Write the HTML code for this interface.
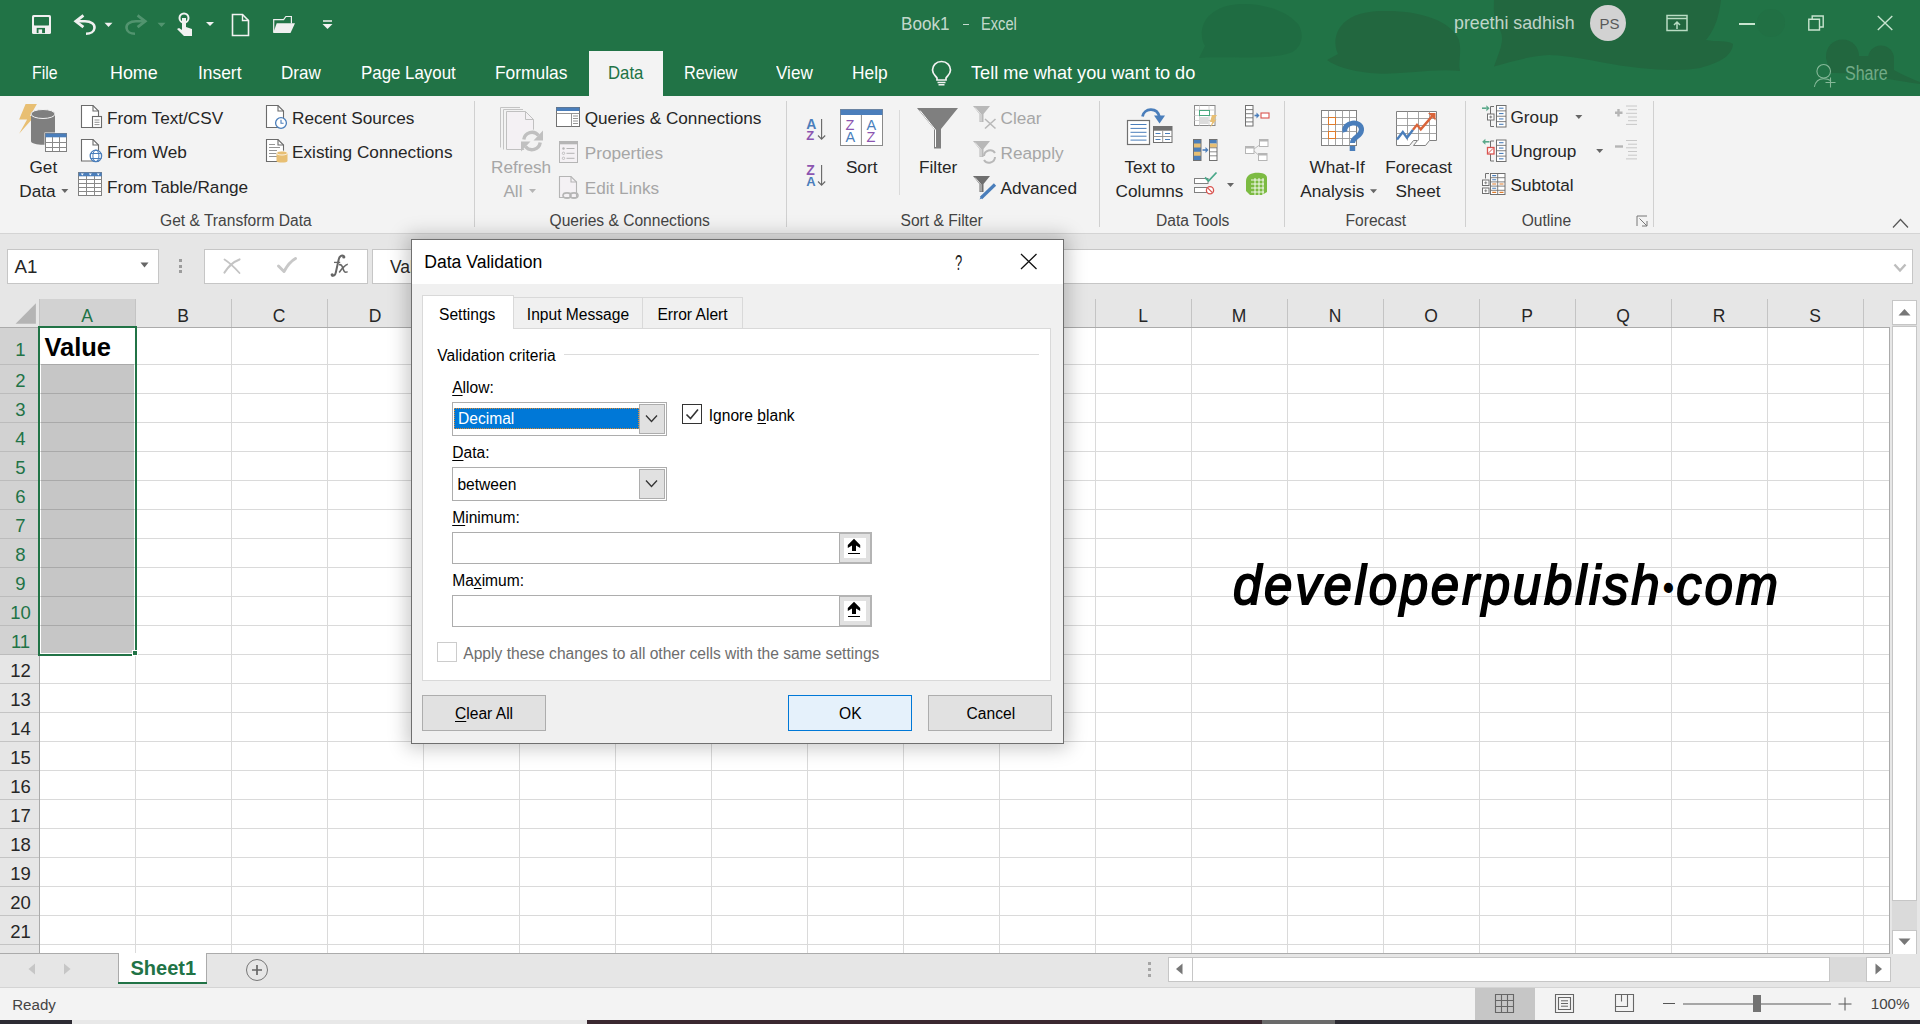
<!DOCTYPE html>
<html><head><meta charset="utf-8"><title>Excel - Data Validation</title>
<style>
html,body{margin:0;padding:0;width:1920px;height:1024px;overflow:hidden;background:#fff;}
body{position:relative;font-family:"Liberation Sans",sans-serif;}
.t{position:absolute;white-space:nowrap;line-height:1;}
.r{position:absolute;box-sizing:border-box;}
u{text-decoration:underline;text-underline-offset:2px;}
</style></head><body>
<div class="r" style="left:0px;top:0px;width:1920px;height:96px;background:#217346;"></div>
<svg class="r" style="left:0;top:0" width="1920" height="96" viewBox="0 0 1920 96"><path d="M1199 58 L1205 46 C1196 30 1205 6 1240 4 C1262 3 1285 10 1298 24 C1306 36 1300 50 1290 53 C1270 60 1230 56 1199 58Z" fill="#1f6c41" opacity="0.9"/><path d="M1327 60 L1338 54 C1330 36 1340 12 1380 11 C1420 10 1450 20 1459 40 C1462 52 1458 62 1460 71 C1430 68 1400 76 1370 73 C1350 71 1335 66 1327 60Z" fill="#22673f"/><path d="M1494 0 H1721 C1719 15 1716 28 1706 40 C1715 42 1728 40 1733 44 C1732 55 1722 62 1700 68 C1680 72 1640 70 1600 62 C1580 58 1560 55 1549 55 C1530 56 1510 62 1494 66.5 C1500 50 1505 40 1500 30 C1492 18 1494 8 1494 0Z" fill="#22673f"/><circle cx="1842.5" cy="56" r="16.5" fill="#22673f"/><circle cx="1881" cy="58.5" r="13" fill="#22673f"/><path d="M1826 56 H1894 V70 C1905 76 1915 80 1920 82 V84 C1890 80 1860 72 1830 73 Z" fill="#22673f"/><ellipse cx="1771" cy="23" rx="14" ry="14" fill="#217044"/></svg>
<svg class="r" style="left:30px;top:13px;" width="24" height="24" viewBox="0 0 24 24"><g transform="translate(-30 -13)"><rect x="32" y="15" width="19" height="19" rx="1.6" fill="#f0f0f0"/><rect x="34" y="17" width="15" height="8.4" rx="0.6" fill="#217346"/><rect x="36.7" y="27.9" width="8.3" height="5.2" fill="#217346"/><rect x="38.5" y="29.4" width="3.6" height="3.7" fill="#f0f0f0"/></g></svg>
<svg class="r" style="left:70px;top:12px;" width="30" height="26" viewBox="0 0 30 26"><g transform="translate(-70 -12)"><path d="M82.3 16.3 L75.8 21.3 L82.3 26.3" fill="none" stroke="#f0f0f0" stroke-width="2.8" stroke-linecap="square"/><path d="M76.5 21.3 H85 C91.5 21.3 94.8 24.5 94.5 28 C94.2 31.5 90.5 33.8 86 33.8" fill="none" stroke="#f0f0f0" stroke-width="2.6"/></g></svg>
<svg class="r" style="left:104px;top:22px;" width="9" height="6" viewBox="0 0 9 6"><path d="M0.5 0.8h8l-4 4.2z" fill="#f0f0f0"/></svg>
<svg class="r" style="left:122px;top:12px;" width="30" height="26" viewBox="0 0 30 26"><g transform="translate(-122 -12)"><path d="M138.7 16.3 L145.2 21.3 L138.7 26.3" fill="none" stroke="#52946f" stroke-width="2.8" stroke-linecap="square"/><path d="M144.5 21.3 H136 C129.5 21.3 126.2 24.5 126.5 28 C126.8 31.5 130.5 33.8 135 33.8" fill="none" stroke="#52946f" stroke-width="2.6"/></g></svg>
<svg class="r" style="left:157px;top:22px;" width="9" height="6" viewBox="0 0 9 6"><path d="M0.5 0.8h8l-4 4.2z" fill="#52946f"/></svg>
<svg class="r" style="left:175px;top:12px;" width="20" height="25" viewBox="0 0 20 25"><circle cx="9" cy="6" r="4.5" fill="none" stroke="#f2f2f2" stroke-width="2"/><path d="M7 6h4v9l6 2v7H9l-7-7 2-1 3 2z" fill="#f2f2f2"/></svg>
<svg class="r" style="left:205px;top:21px;" width="12" height="8" viewBox="0 0 12 8"><path d="M1 1h8l-4 4z" fill="#f2f2f2"/></svg>
<svg class="r" style="left:231px;top:13px;" width="20" height="24" viewBox="0 0 20 24"><path d="M1.5 1.5h10l6 6v15h-16z" fill="none" stroke="#f2f2f2" stroke-width="1.6"/><path d="M11.5 1.5v6h6" fill="none" stroke="#f2f2f2" stroke-width="1.4"/></svg>
<svg class="r" style="left:270px;top:13px;" width="28" height="23" viewBox="0 0 28 23"><g transform="translate(-270 -13)"><path d="M273.7 32.5 V19.7 H283.6 L285.9 16.5 H291.4 V23.5" fill="none" stroke="#f0f0f0" stroke-width="1.2"/><path d="M276.7 23.2 H295 L290.5 33 H273.2 Z" fill="#f0f0f0"/></g></svg>
<svg class="r" style="left:321px;top:20px;" width="13" height="10" viewBox="0 0 13 10"><path d="M2 1h9" stroke="#f2f2f2" stroke-width="1.5"/><path d="M1.5 4h10l-5 5z" fill="#f2f2f2"/></svg>
<div class="t" style="left:901.00px;top:14.99px;font-size:18.84px;color:rgba(255,255,255,0.74);font-weight:normal;transform:scaleX(0.9080);transform-origin:0 0;">Book1</div>
<div class="r" style="left:963px;top:24px;width:5.5px;height:1.2px;background:rgba(255,255,255,0.74);"></div>
<div class="t" style="left:980.50px;top:14.99px;font-size:18.84px;color:rgba(255,255,255,0.74);font-weight:normal;transform:scaleX(0.7772);transform-origin:0 0;">Excel</div>
<div class="t" style="left:1454px;top:14.87px;font-size:17.8px;color:rgba(255,255,255,0.72);font-weight:normal;font-style:normal;">preethi sadhish</div>
<div class="r" style="left:1590px;top:5px;width:36px;height:36px;border-radius:50%;background:#d2d2d2;"></div>
<div class="t" style="left:1599.5px;top:16.05px;font-size:15px;color:#595959;font-weight:normal;font-style:normal;">PS</div>
<svg class="r" style="left:1666px;top:14px;" width="22" height="18" viewBox="0 0 22 18"><path d="M1 1.5h20v15H1z" fill="none" stroke="#b9dcc3" stroke-width="1.5"/><path d="M1 4.5h20" stroke="#b9dcc3" stroke-width="1.5"/><path d="M11 15V8M8 11l3-3 3 3" fill="none" stroke="#b9dcc3" stroke-width="1.5"/></svg>
<div class="r" style="left:1739px;top:23px;width:16px;height:1.6px;background:#c8e4cf;"></div>
<svg class="r" style="left:1806px;top:13px;" width="20" height="20" viewBox="0 0 20 20"><g transform="translate(-1806 -13)"><path d="M1808.8 19.2h10.7v10.8h-10.7z" fill="none" stroke="#c8e4cf" stroke-width="1.4"/><path d="M1812.2 19.2v-3.2h11v11h-3.7" fill="none" stroke="#c8e4cf" stroke-width="1.4"/></g></svg>
<svg class="r" style="left:1876px;top:14px;" width="18" height="18" viewBox="0 0 18 18"><path d="M1.8 2l14.5 14M16.3 2L1.8 16" stroke="#c8e4cf" stroke-width="1.4"/></svg>
<div class="r" style="left:589px;top:51px;width:74px;height:45px;background:#f3f3f3;"></div>
<div class="t" style="left:31.80px;top:63.99px;font-size:18.84px;color:#ffffff;font-weight:normal;transform:scaleX(0.8407);transform-origin:0 0;">File</div>
<div class="t" style="left:110.00px;top:63.99px;font-size:18.84px;color:#ffffff;font-weight:normal;transform:scaleX(0.9502);transform-origin:0 0;">Home</div>
<div class="t" style="left:197.50px;top:63.99px;font-size:18.84px;color:#ffffff;font-weight:normal;transform:scaleX(0.9235);transform-origin:0 0;">Insert</div>
<div class="t" style="left:280.80px;top:63.99px;font-size:18.84px;color:#ffffff;font-weight:normal;transform:scaleX(0.9047);transform-origin:0 0;">Draw</div>
<div class="t" style="left:361.00px;top:63.99px;font-size:18.84px;color:#ffffff;font-weight:normal;transform:scaleX(0.8961);transform-origin:0 0;">Page Layout</div>
<div class="t" style="left:495.00px;top:63.99px;font-size:18.84px;color:#ffffff;font-weight:normal;transform:scaleX(0.9228);transform-origin:0 0;">Formulas</div>
<div class="t" style="left:683.50px;top:63.99px;font-size:18.84px;color:#ffffff;font-weight:normal;transform:scaleX(0.8641);transform-origin:0 0;">Review</div>
<div class="t" style="left:776.20px;top:63.99px;font-size:18.84px;color:#ffffff;font-weight:normal;transform:scaleX(0.9085);transform-origin:0 0;">View</div>
<div class="t" style="left:852.40px;top:63.99px;font-size:18.84px;color:#ffffff;font-weight:normal;transform:scaleX(0.9195);transform-origin:0 0;">Help</div>
<div class="t" style="left:608.00px;top:63.99px;font-size:18.84px;color:#217346;font-weight:normal;transform:scaleX(0.8884);transform-origin:0 0;">Data</div>
<svg class="r" style="left:931px;top:60px;" width="21" height="26" viewBox="0 0 21 26"><path d="M10.5 1.5 C5 1.5 1.5 5.5 1.5 10 C1.5 14 4.5 15.5 6 18 V20 H15 V18 C16.5 15.5 19.5 14 19.5 10 C19.5 5.5 16 1.5 10.5 1.5Z" fill="none" stroke="#f2f2f2" stroke-width="1.7"/><path d="M6.5 22.5h8M7.5 24.8h6" stroke="#f2f2f2" stroke-width="1.5"/></svg>
<div class="t" style="left:970.50px;top:63.99px;font-size:18.84px;color:#ffffff;font-weight:normal;transform:scaleX(0.9656);transform-origin:0 0;">Tell me what you want to do</div>
<svg class="r" style="left:1812px;top:62px;" width="26" height="28" viewBox="0 0 26 28"><g transform="translate(-1812 -62)"><circle cx="1823.7" cy="71.3" r="6.8" fill="none" stroke="#86b999" stroke-width="1.1"/><path d="M1814.4 86.8 C1815.5 81.5 1819 78.8 1823.5 78.8 C1826.5 78.8 1829 79.5 1831 80.8" fill="none" stroke="#86b999" stroke-width="1.1"/><path d="M1830.5 77.5v10M1825.5 82.5h10" stroke="#86b999" stroke-width="1.1"/></g></svg>
<div class="t" style="left:1844.70px;top:63.87px;font-size:19.57px;color:#72ab87;font-weight:normal;transform:scaleX(0.8193);transform-origin:0 0;">Share</div>
<div class="r" style="left:0px;top:96px;width:1920px;height:137px;background:#f3f3f3;"></div>
<div class="r" style="left:0px;top:233px;width:1920px;height:1px;background:#d4d4d4;"></div>
<div class="r" style="left:474px;top:101px;width:1px;height:126px;background:#d0d0d0;"></div>
<div class="r" style="left:786px;top:101px;width:1px;height:126px;background:#d0d0d0;"></div>
<div class="r" style="left:1099px;top:101px;width:1px;height:126px;background:#d0d0d0;"></div>
<div class="r" style="left:1284px;top:101px;width:1px;height:126px;background:#d0d0d0;"></div>
<div class="r" style="left:1465px;top:101px;width:1px;height:126px;background:#d0d0d0;"></div>
<div class="r" style="left:1653px;top:101px;width:1px;height:126px;background:#d0d0d0;"></div>
<div class="r" style="left:899px;top:110px;width:1px;height:85px;background:#dadada;"></div>
<div class="t" style="left:160px;top:213.04px;font-size:15.6px;color:#444444;font-weight:normal;font-style:normal;">Get &amp; Transform Data</div>
<div class="t" style="left:549.5px;top:213.04px;font-size:15.6px;color:#444444;font-weight:normal;font-style:normal;">Queries &amp; Connections</div>
<div class="t" style="left:900.5px;top:213.04px;font-size:15.6px;color:#444444;font-weight:normal;font-style:normal;">Sort &amp; Filter</div>
<div class="t" style="left:1156px;top:213.04px;font-size:15.6px;color:#444444;font-weight:normal;font-style:normal;">Data Tools</div>
<div class="t" style="left:1345.5px;top:213.04px;font-size:15.6px;color:#444444;font-weight:normal;font-style:normal;">Forecast</div>
<div class="t" style="left:1521.7px;top:213.04px;font-size:15.6px;color:#444444;font-weight:normal;font-style:normal;">Outline</div>
<div class="t" style="left:29.5px;top:158.98px;font-size:17.2px;color:#262626;font-weight:normal;font-style:normal;">Get</div>
<div class="t" style="left:19.3px;top:182.78px;font-size:17.2px;color:#262626;font-weight:normal;font-style:normal;">Data</div>
<div class="t" style="left:107px;top:109.68px;font-size:17.2px;color:#262626;font-weight:normal;font-style:normal;">From Text/CSV</div>
<div class="t" style="left:107px;top:144.18px;font-size:17.2px;color:#262626;font-weight:normal;font-style:normal;">From Web</div>
<div class="t" style="left:107px;top:178.88px;font-size:17.2px;color:#262626;font-weight:normal;font-style:normal;">From Table/Range</div>
<div class="t" style="left:292px;top:109.68px;font-size:17.2px;color:#262626;font-weight:normal;font-style:normal;">Recent Sources</div>
<div class="t" style="left:292px;top:144.18px;font-size:17.2px;color:#262626;font-weight:normal;font-style:normal;">Existing Connections</div>
<div class="t" style="left:491px;top:158.98px;font-size:17.2px;color:#a6a6a6;font-weight:normal;font-style:normal;">Refresh</div>
<div class="t" style="left:503.4px;top:182.78px;font-size:17.2px;color:#a6a6a6;font-weight:normal;font-style:normal;">All</div>
<div class="t" style="left:584.7px;top:109.68px;font-size:17.2px;color:#262626;font-weight:normal;font-style:normal;">Queries &amp; Connections</div>
<div class="t" style="left:584.7px;top:145.18px;font-size:17.2px;color:#a6a6a6;font-weight:normal;font-style:normal;">Properties</div>
<div class="t" style="left:584.7px;top:179.88px;font-size:17.2px;color:#a6a6a6;font-weight:normal;font-style:normal;">Edit Links</div>
<div class="t" style="left:845.9px;top:158.98px;font-size:17.2px;color:#262626;font-weight:normal;font-style:normal;">Sort</div>
<div class="t" style="left:919px;top:158.98px;font-size:17.2px;color:#262626;font-weight:normal;font-style:normal;">Filter</div>
<div class="t" style="left:1000.5px;top:109.68px;font-size:17.2px;color:#a6a6a6;font-weight:normal;font-style:normal;">Clear</div>
<div class="t" style="left:1000.5px;top:145.18px;font-size:17.2px;color:#a6a6a6;font-weight:normal;font-style:normal;">Reapply</div>
<div class="t" style="left:1000.5px;top:179.88px;font-size:17.2px;color:#262626;font-weight:normal;font-style:normal;">Advanced</div>
<div class="t" style="left:1124.4px;top:158.98px;font-size:17.2px;color:#262626;font-weight:normal;font-style:normal;">Text to</div>
<div class="t" style="left:1115.6px;top:182.78px;font-size:17.2px;color:#262626;font-weight:normal;font-style:normal;">Columns</div>
<div class="t" style="left:1309.5px;top:158.98px;font-size:17.2px;color:#262626;font-weight:normal;font-style:normal;">What-If</div>
<div class="t" style="left:1300.3px;top:182.78px;font-size:17.2px;color:#262626;font-weight:normal;font-style:normal;">Analysis</div>
<div class="t" style="left:1385.2px;top:158.98px;font-size:17.2px;color:#262626;font-weight:normal;font-style:normal;">Forecast</div>
<div class="t" style="left:1395.6px;top:182.78px;font-size:17.2px;color:#262626;font-weight:normal;font-style:normal;">Sheet</div>
<div class="t" style="left:1510.5px;top:109.18px;font-size:17.2px;color:#262626;font-weight:normal;font-style:normal;">Group</div>
<div class="t" style="left:1510.5px;top:143.38px;font-size:17.2px;color:#262626;font-weight:normal;font-style:normal;">Ungroup</div>
<div class="t" style="left:1510.5px;top:177.18px;font-size:17.2px;color:#262626;font-weight:normal;font-style:normal;">Subtotal</div>
<svg class="r" style="left:0;top:0" width="1920" height="240" viewBox="0 0 1920 240"><path d="M61.3 189h7l-3.5 4z" fill="#666"/><path d="M529 189h7l-3.5 4z" fill="#b5b5b5"/><path d="M1227 183h7l-3.5 4z" fill="#666"/><path d="M1370 189.2h7l-3.5 4z" fill="#666"/><path d="M1575.3 115h7l-3.5 4z" fill="#666"/><path d="M1596.2 149h7l-3.5 4z" fill="#666"/><path d="M25.6 104.1 H36.9 L30 116.1 H34.9 L19.1 133.7 L27.1 119.5 H19.1 Z" fill="#e8bf73"/><path d="M31 114 V141 C31 146 55 146 55 141 V114 Z" fill="#7f7f7f"/><ellipse cx="43" cy="114" rx="12" ry="4.5" fill="#7f7f7f" stroke="#f3f3f3" stroke-width="1"/><rect x="44.5" y="132.5" width="23" height="20" fill="#f3f3f3"/><rect x="45.5" y="133.5" width="21" height="18" fill="#fff" stroke="#808080" stroke-width="1"/><rect x="45.5" y="133.5" width="21" height="3.8" fill="#4a7ebb"/><path d="M52.5 137v14M59.5 137v14M45.5 142.5h21M45.5 147.5h21" stroke="#8a8a8a" stroke-width="1"/><path d="M81.5 105.5h11.5l5.5 5.5v16.5h-17z" fill="#fff" stroke="#6b6b6b" stroke-width="1.1"/><path d="M93.0 105.5v5.5h5.5" fill="none" stroke="#6b6b6b" stroke-width="1.1"/><rect x="92.5" y="116.5" width="9" height="11" fill="#fff" stroke="#6b6b6b" stroke-width="1.1"/><path d="M94.5 120h5M94.5 122.3h5M94.5 124.6h5" stroke="#888" stroke-width="0.9"/><path d="M81.5 139.5h11.5l5.5 5.5v16.0h-17z" fill="#fff" stroke="#6b6b6b" stroke-width="1.1"/><path d="M93.0 139.5v5.5h5.5" fill="none" stroke="#6b6b6b" stroke-width="1.1"/><circle cx="95.9" cy="155.9" r="5.7" fill="#fff" stroke="#4a7ebb" stroke-width="1.3"/><path d="M90.5 153.5h11M90.5 158.5h11" stroke="#4a7ebb" stroke-width="1"/><ellipse cx="95.9" cy="155.9" rx="3" ry="5.7" fill="none" stroke="#4a7ebb" stroke-width="1"/><rect x="78.5" y="172.5" width="23" height="23" fill="#fff" stroke="#808080" stroke-width="1"/><rect x="78.7" y="172.5" width="23" height="3.8" fill="#4a7ebb"/><path d="M86.5 176v19.5M94.5 176v19.5M78.7 179.5h23M78.7 183.5h23M78.7 187.5h23M78.7 191.5h23" stroke="#8a8a8a" stroke-width="1"/><path d="M80.8 173.6h3l-1.5 1.8zM88.8 173.6h3l-1.5 1.8zM96.8 173.6h3l-1.5 1.8z" fill="#fff"/><path d="M266.5 105.5h11.5l5.5 5.5v16.5h-17z" fill="#fff" stroke="#6b6b6b" stroke-width="1.1"/><path d="M278.0 105.5v5.5h5.5" fill="none" stroke="#6b6b6b" stroke-width="1.1"/><circle cx="281" cy="123" r="5.4" fill="#fff" stroke="#4a7ebb" stroke-width="1.3"/><path d="M281 119.8v3.4h2.6" fill="none" stroke="#4a7ebb" stroke-width="1.1"/><path d="M266.5 139.5h11.5l5.5 5.5v16.5h-17z" fill="#fff" stroke="#6b6b6b" stroke-width="1.1"/><path d="M278.0 139.5v5.5h5.5" fill="none" stroke="#6b6b6b" stroke-width="1.1"/><path d="M269 144.5h6M269 147.5h11M269 150.5h8M269 153.5h8M269 156.5h8" stroke="#8a8a8a" stroke-width="0.9"/><path d="M276.5 153v8c0 2 11 2 11 0v-8z" fill="#e8bf73"/><ellipse cx="282" cy="153" rx="5.5" ry="2" fill="#e8bf73" stroke="#fff" stroke-width=".8"/><path d="M500.5 147.5V107.5H520" fill="none" stroke="#c4c4c4" stroke-width="1"/><path d="M503.5 149.5V109.5H523" fill="none" stroke="#c4c4c4" stroke-width="1"/><path d="M506.5 149.5V111.5H525.5L533.5 119.5V149.5Z" fill="#f4f1f4" stroke="#c0c0c0" stroke-width="1"/><path d="M525.5 111.5V119.5H533.5" fill="none" stroke="#c0c0c0" stroke-width="1"/><circle cx="532" cy="141" r="11.5" fill="#f3f3f3"/><path d="M523.8 139.5 A8.3 8.3 0 0 1 538.5 135.5" fill="none" stroke="#c0c0c0" stroke-width="3.4"/><path d="M543 130.5v10h-9.5z" fill="#c0c0c0"/><path d="M540.2 142.5 A8.3 8.3 0 0 1 525.5 146.5" fill="none" stroke="#c0c0c0" stroke-width="3.4"/><path d="M521 151.5v-10h9.5z" fill="#c0c0c0"/><rect x="556.5" y="107.5" width="23" height="19" fill="#fff" stroke="#707070" stroke-width="1"/><rect x="556.5" y="107.5" width="23" height="3.5" fill="#4a7ebb"/><path d="M556.5 113.5h23M571.5 113.5v13M573 116h5M573 118.5h5M573 121h5M573 123.5h5" stroke="#8a8a8a" stroke-width="0.9"/><rect x="559.5" y="141.5" width="18" height="21" fill="#f4f1f4" stroke="#b5b5b5" stroke-width="1"/><rect x="559.5" y="141.5" width="18" height="2.8" fill="#b5b5b5"/><circle cx="563.5" cy="148.5" r="1.2" fill="#b5b5b5"/><circle cx="563.5" cy="153.3" r="1.2" fill="none" stroke="#b5b5b5" stroke-width=".8"/><circle cx="563.5" cy="158.3" r="1.2" fill="none" stroke="#b5b5b5" stroke-width=".8"/><path d="M566.5 148.5h8M566.5 153.3h8M566.5 158.3h8" stroke="#b5b5b5" stroke-width="1"/><path d="M559.5 176.5h11.5l5.5 5.5v15.5h-17z" fill="#f4f1f4" stroke="#b5b5b5" stroke-width="1.1"/><path d="M571.0 176.5v5.5h5.5" fill="none" stroke="#b5b5b5" stroke-width="1.1"/><ellipse cx="567" cy="195.5" rx="4" ry="2.6" fill="none" stroke="#b5b5b5" stroke-width="1.6"/><ellipse cx="574" cy="195.5" rx="4" ry="2.6" fill="none" stroke="#b5b5b5" stroke-width="1.6"/><text x="806.3" y="128.6" font-family="Liberation Sans" font-weight="bold" font-size="14" fill="#4a7ebb">A</text><text x="806.3" y="139.6" font-family="Liberation Sans" font-weight="bold" font-size="13" fill="#8c55b0">Z</text><text x="806.3" y="174.6" font-family="Liberation Sans" font-weight="bold" font-size="14" fill="#8c55b0">Z</text><text x="806.3" y="185.6" font-family="Liberation Sans" font-weight="bold" font-size="13" fill="#4a7ebb">A</text><path d="M821.6 119v20M818 135.5l3.6 3.6 3.6-3.6" fill="none" stroke="#666" stroke-width="1.1"/><path d="M821.6 165v20M818 181.5l3.6 3.6 3.6-3.6" fill="none" stroke="#666" stroke-width="1.1"/><rect x="840.5" y="109.5" width="42" height="36" fill="#fff" stroke="#8a8a8a" stroke-width="1"/><rect x="840.5" y="109.5" width="42" height="5.5" fill="#4a7ebb"/><path d="M861.4 115v30.5" stroke="#8a8a8a" stroke-width="1"/><text x="845.5" y="129.5" font-family="Liberation Sans" font-size="14.5" fill="#8c55b0">Z</text><text x="845.5" y="142" font-family="Liberation Sans" font-size="14.5" fill="#4a7ebb">A</text><text x="866.5" y="129.5" font-family="Liberation Sans" font-size="14.5" fill="#4a7ebb">A</text><text x="866.5" y="142" font-family="Liberation Sans" font-size="14.5" fill="#8c55b0">Z</text><path d="M917 108h41l-17 21v19.5h-7V129z" fill="#7f7f7f"/><path d="M920 110.5l15.5 19.5v17" fill="none" stroke="#fff" stroke-width="1"/><path d="M973 106h17l-6.5 8v8h-4v-8z" fill="#b8b8b8"/><path d="M975 107.5l6 7v7" fill="none" stroke="#f3f3f3" stroke-width=".8"/><path d="M985 119l10.5 9.5M995.5 119l-10.5 9.5" stroke="#b8b8b8" stroke-width="1.6"/><path d="M973 141h17l-6.5 8v8h-4v-8z" fill="#b8b8b8"/><path d="M975 142.5l6 7v7" fill="none" stroke="#f3f3f3" stroke-width=".8"/><path d="M984 156 a6 6 0 0 1 11 -3M995 157 a6 6 0 0 1 -11 3" fill="none" stroke="#b8b8b8" stroke-width="2"/><path d="M973 176h17l-6.5 8v8h-4v-8z" fill="#6e6e6e"/><path d="M975 177.5l6 7v7" fill="none" stroke="#f3f3f3" stroke-width=".8"/><path d="M981 198l14-13.5" stroke="#4a7ebb" stroke-width="3.2"/><path d="M979.5 199.5l2-4 2 2z" fill="#4a7ebb"/><rect x="1127.5" y="120.5" width="22" height="24" fill="#fff" stroke="#707070" stroke-width="1.2"/><path d="M1130.5 124.5h16" stroke="#4a7ebb" stroke-width="1"/><path d="M1130.5 128.4h16" stroke="#4a7ebb" stroke-width="1"/><path d="M1130.5 132.3h16" stroke="#4a7ebb" stroke-width="1"/><path d="M1130.5 136.2h16" stroke="#4a7ebb" stroke-width="1"/><path d="M1130.5 140.1h16" stroke="#4a7ebb" stroke-width="1"/><rect x="1153.5" y="126.5" width="18.5" height="16" fill="#fff" stroke="#707070" stroke-width="1"/><rect x="1153.5" y="126.5" width="18.5" height="4.2" fill="#707070"/><path d="M1162.7 131v11.5M1153.5 136.5h18.5" stroke="#8a8a8a" stroke-width=".9"/><path d="M1155.5 133.5h5M1165 133.5h5M1155.5 139.5h5M1165 139.5h5" stroke="#4a7ebb" stroke-width="1"/><path d="M1142.5 116.5 C1144 108 1157 106.5 1159.5 117" fill="none" stroke="#4a7ebb" stroke-width="2.8"/><path d="M1154 115.5h11l-5.5 8z" fill="#4a7ebb"/><rect x="1194.5" y="105.5" width="20.5" height="20" fill="#fff" stroke="#8a8a8a" stroke-width="1"/><path d="M1194.5 110h20.5M1194.5 115.5h20.5M1194.5 120.5h20.5M1199.5 105.5v20M1209 105.5v20" stroke="#cfcfcf" stroke-width=".9"/><rect x="1199.5" y="110.5" width="10" height="5" fill="#fff" stroke="#4aa87f" stroke-width="1"/><rect x="1199.5" y="117" width="9" height="7" fill="#dcdcdc"/><path d="M1212 115h5l-3 4.5h2.5l-6.5 8.2 2.2-5.8h-2.2z" fill="#e8bf73"/><rect x="1193.5" y="139.5" width="7.5" height="21" fill="#4a7ebb" stroke="#707070" stroke-width="1"/><path d="M1194 143.6h6.6v4h-6.6zM1194 151.7h6.6v4h-6.6z" fill="#e8bf73"/><rect x="1209.5" y="139.5" width="7.5" height="21" fill="#fff" stroke="#707070" stroke-width="1"/><path d="M1210 140h6.6v3.6h-6.6z" fill="#4a7ebb"/><path d="M1210 143.6h6.6v4h-6.6z" fill="#e8bf73"/><path d="M1209.5 147.8h7.5M1209.5 151.8h7.5M1209.5 155.8h7.5" stroke="#707070" stroke-width=".8"/><path d="M1202.5 150h4" stroke="#4a7ebb" stroke-width="1.6"/><path d="M1205.5 147l3 3-3 3z" fill="#4a7ebb"/><rect x="1194.5" y="178.5" width="13.5" height="5" fill="#fff" stroke="#808080" stroke-width="1"/><rect x="1194.5" y="187.5" width="13.5" height="5" fill="#fff" stroke="#808080" stroke-width="1"/><path d="M1205 177.5l3.5 3.5 8-8.5" fill="none" stroke="#4aa88a" stroke-width="1.8"/><circle cx="1210" cy="190.2" r="3.6" fill="#fff" stroke="#d9534f" stroke-width="1.3"/><path d="M1207.6 187.8l4.8 4.8" stroke="#d9534f" stroke-width="1.2"/><rect x="1245.5" y="105.5" width="7.5" height="20.5" fill="#fff" stroke="#707070" stroke-width="1"/><path d="M1245.5 109.6h7.5M1245.5 113.7h7.5M1245.5 117.8h7.5M1245.5 121.9h7.5" stroke="#707070" stroke-width=".9"/><path d="M1254.5 115.5h3" stroke="#4a7ebb" stroke-width="1.6"/><path d="M1256.5 112.5l3 3-3 3z" fill="#4a7ebb"/><rect x="1261" y="113" width="8" height="5" fill="#fff" stroke="#d9534f" stroke-width="1.1"/><rect x="1259.5" y="139.5" width="8.5" height="7" fill="#fff" stroke="#b5b5b5" stroke-width="1"/><rect x="1245.5" y="146.5" width="8.5" height="7" fill="#fff" stroke="#b5b5b5" stroke-width="1"/><rect x="1258.5" y="153.5" width="8.5" height="7" fill="#fff" stroke="#b5b5b5" stroke-width="1"/><path d="M1259.5 140h8.5v1.6h-8.5zM1245.5 147h8.5v1.6h-8.5zM1258.5 154h8.5v1.6h-8.5z" fill="#b5b5b5"/><path d="M1254 149l5.5-4M1254 151l4.5 4" stroke="#b5b5b5" stroke-width=".9"/><path d="M1246 181 C1246 175 1252 172.8 1257 172.8 C1262 172.8 1267 174 1267 178 V192 L1262 195 H1250 L1246 191 Z" fill="#7cbb42"/><path d="M1251 180h13M1251 184h13M1251 188h13M1251 192h13M1255 178v17M1259 178v17M1263 178v17" stroke="#fff" stroke-width=".9"/><rect x="1321.5" y="110.5" width="35" height="35" fill="#fff" stroke="#808080" stroke-width="1"/><path d="M1328.5 110.5v35M1321.5 117.5h35" stroke="#9a9a9a" stroke-width=".9"/><path d="M1335.5 110.5v35M1321.5 124.5h35" stroke="#9a9a9a" stroke-width=".9"/><path d="M1342.5 110.5v35M1321.5 131.5h35" stroke="#9a9a9a" stroke-width=".9"/><path d="M1349.5 110.5v35M1321.5 138.5h35" stroke="#9a9a9a" stroke-width=".9"/><rect x="1328.5" y="117.5" width="7" height="7" fill="#fff" stroke="#e07b2a" stroke-width="1"/><rect x="1328.5" y="131.5" width="7" height="7" fill="#fff" stroke="#e07b2a" stroke-width="1"/><path d="M1345 132 C1342 122 1362 119 1361.5 130 C1361 137 1352.5 136.5 1352.5 143" fill="none" stroke="#4a7ebb" stroke-width="5"/><rect x="1349.7" y="146" width="5.5" height="5" fill="#4a7ebb"/><path d="M1396.5 111.5h40v29h-7l-4 5h-12l4-5h-4l-4 5h-13z" fill="#fff" stroke="#808080" stroke-width="1"/><path d="M1396.5 118.5h40M1396.5 125.5h40M1396.5 133.5h40M1407.5 111.5v29M1418.5 111.5v29M1429.5 111.5v29" stroke="#9a9a9a" stroke-width=".9"/><path d="M1397 139.5l5.8-7.5 4.2 5.8 6-8" fill="none" stroke="#4a7ebb" stroke-width="2.4"/><path d="M1413 129.8l4-5 3.8 4.6 12-14" fill="none" stroke="#d9643a" stroke-width="2.4"/><path d="M1428 113h7.5v7.5z" fill="#d9643a"/><path d="M1494 106.5h-3.5v20h3.5" fill="none" stroke="#707070" stroke-width="1"/><rect x="1496.5" y="105.5" width="9.5" height="21.5" fill="#fff" stroke="#707070" stroke-width="1"/><path d="M1496.5 110.87h9.5" stroke="#707070" stroke-width=".9"/><path d="M1496.5 116.24h9.5" stroke="#707070" stroke-width=".9"/><path d="M1496.5 121.61h9.5" stroke="#707070" stroke-width=".9"/><path d="M1499 108.20h4.5" stroke="#4a7ebb" stroke-width="1.1"/><path d="M1499 113.57h4.5" stroke="#4a7ebb" stroke-width="1.1"/><path d="M1499 118.94h4.5" stroke="#4a7ebb" stroke-width="1.1"/><path d="M1499 124.31h4.5" stroke="#4a7ebb" stroke-width="1.1"/><rect x="1487.5" y="114" width="6.5" height="6" fill="#fff" stroke="#707070" stroke-width="1"/><path d="M1490.75 115.5v3M1489.25 117h3" stroke="#707070" stroke-width=".9"/><path d="M1482 108.2h4.5" stroke="#5aa88a" stroke-width="1.6"/><path d="M1489.6 108.2l-3.2-3v6z" fill="#5aa88a"/><path d="M1494 141.0h-3.5v20h3.5" fill="none" stroke="#707070" stroke-width="1"/><rect x="1496.5" y="140.0" width="9.5" height="21.5" fill="#fff" stroke="#707070" stroke-width="1"/><path d="M1496.5 145.37h9.5" stroke="#707070" stroke-width=".9"/><path d="M1496.5 150.74h9.5" stroke="#707070" stroke-width=".9"/><path d="M1496.5 156.11h9.5" stroke="#707070" stroke-width=".9"/><path d="M1499 142.70h4.5" stroke="#4a7ebb" stroke-width="1.1"/><path d="M1499 148.07h4.5" stroke="#4a7ebb" stroke-width="1.1"/><path d="M1499 153.44h4.5" stroke="#4a7ebb" stroke-width="1.1"/><path d="M1499 158.81h4.5" stroke="#4a7ebb" stroke-width="1.1"/><rect x="1487.5" y="147.5" width="6.5" height="6.5" fill="#fff" stroke="#d9534f" stroke-width="1.3"/><path d="M1488.3 153.2l4.9-4.9" stroke="#d9534f" stroke-width="1"/><path d="M1489.5 141.8h-5" stroke="#5aa88a" stroke-width="1.6"/><path d="M1482.2 141.8l3.2-3v6z" fill="#5aa88a"/><path d="M1485.5 178.5v-5h3.5" fill="none" stroke="#707070" stroke-width="1"/><rect x="1482.5" y="180" width="6.5" height="5.5" fill="#fff" stroke="#707070" stroke-width="1"/><rect x="1482.5" y="188" width="6.5" height="5.5" fill="#fff" stroke="#707070" stroke-width="1"/><rect x="1490.5" y="173.5" width="14.5" height="21" fill="#fff" stroke="#707070" stroke-width="1"/><path d="M1497.7 173.5v21M1490.5 177.7h14.5M1490.5 181.9h14.5M1490.5 186.1h14.5M1490.5 190.3h14.5" stroke="#707070" stroke-width=".9"/><path d="M1492.2 175.6h4M1492.2 179.8h4M1492.2 188.2h4" stroke="#4a7ebb" stroke-width="1.1"/><path d="M1492.2 184h4M1499.5 184h4M1492.2 192.4h4M1499.5 192.4h4" stroke="#e07b2a" stroke-width="1.1"/><path d="M1485.75 181.3v3M1484.25 182.8h3M1485.75 189.3v3M1484.25 190.8h3" stroke="#707070" stroke-width=".8"/><path d="M1618.5 109v7.5M1615 112.7h7.5" stroke="#b5b5b5" stroke-width="2.4"/><path d="M1626 106h11M1628 109.7h9M1626 113.3h11M1628 117h9M1628 120.7h9M1626 124.4h11" stroke="#c8c8c8" stroke-width="1"/><path d="M1615 146.5h8" stroke="#b5b5b5" stroke-width="2.4"/><path d="M1626 140.5h11M1628 144.2h9M1626 147.8h11M1628 151.5h9M1628 155.2h9M1626 158.9h11" stroke="#c8c8c8" stroke-width="1"/><path d="M1637 226v-10h10" fill="none" stroke="#777" stroke-width="1"/><path d="M1639.5 218.5l7.5 7.5M1647 221v5h-5" fill="none" stroke="#777" stroke-width="1"/><path d="M1893 227.5l7.5-8 7.5 8" fill="none" stroke="#555" stroke-width="1.2"/></svg>
<div class="r" style="left:0px;top:234px;width:1920px;height:720px;background:#e6e6e6;"></div>
<div class="r" style="left:7px;top:249px;width:152px;height:35px;background:#ffffff;border:1px solid #c6c6c6;"></div>
<div class="t" style="left:14.5px;top:258.41px;font-size:18.7px;color:#262626;font-weight:normal;font-style:normal;">A1</div>
<svg class="r" style="left:140px;top:262px;" width="9" height="6" viewBox="0 0 9 6"><path d="M0.5 0.5h8l-4 5z" fill="#666"/></svg>
<div class="r" style="left:179px;top:259px;width:3px;height:3px;background:#9c9c9c;"></div>
<div class="r" style="left:179px;top:264.5px;width:3px;height:3px;background:#9c9c9c;"></div>
<div class="r" style="left:179px;top:270px;width:3px;height:3px;background:#9c9c9c;"></div>
<div class="r" style="left:204px;top:249px;width:164px;height:35px;background:#ffffff;border:1px solid #c6c6c6;"></div>
<svg class="r" style="left:222px;top:258px;" width="20" height="17" viewBox="0 0 20 17"><path d="M2.5 14.5 C6 9 11 4 17.5 1.5" fill="none" stroke="#c4c4c4" stroke-width="2.2" stroke-linecap="round"/><path d="M2.5 1.5 C8 5 13 10 17.5 15" fill="none" stroke="#c4c4c4" stroke-width="1.8" stroke-linecap="round"/></svg>
<svg class="r" style="left:276px;top:256px;" width="22" height="19" viewBox="0 0 22 19"><path d="M2.5 10 L8 15.5 C11 10 15 5 19.5 2.5" fill="none" stroke="#c8c8c8" stroke-width="3" stroke-linecap="round" stroke-linejoin="round"/></svg>
<svg class="r" style="left:328px;top:252px;" width="24" height="28" viewBox="0 0 24 28"><g transform="translate(-328 -252)"><path d="M344.2 256.3 C341.5 254.5 339.3 256.5 338.7 259.5 L335.8 272.5 C335.2 275.5 333.5 276.3 331.8 275.3" fill="none" stroke="#666" stroke-width="2"/><circle cx="343.8" cy="257" r="1.6" fill="#666"/><circle cx="332.2" cy="274.8" r="1.6" fill="#666"/><path d="M334 262.4h6.2" stroke="#666" stroke-width="1.3"/><path d="M339 264.8 C341.5 264 342.2 266 343 268.5 C344 272 345 273 347.6 271.6" fill="none" stroke="#666" stroke-width="1.6"/><path d="M347.8 264.3 C345.5 264.5 341 269.5 339.2 272.5" fill="none" stroke="#666" stroke-width="1.5"/></g></svg>
<div class="r" style="left:372px;top:249px;width:1541px;height:35px;background:#ffffff;border:1px solid #c6c6c6;"></div>
<div class="t" style="left:390px;top:258.93px;font-size:17.5px;color:#262626;font-weight:normal;font-style:normal;">Value</div>
<svg class="r" style="left:1893px;top:263px;" width="14" height="10" viewBox="0 0 14 10"><path d="M1.5 1.5l5.5 6 5.5-6" fill="none" stroke="#bdbdbd" stroke-width="2.4"/></svg>
<div class="r" style="left:0px;top:299px;width:1890px;height:28px;background:#e6e6e6;"></div>
<svg class="r" style="left:15px;top:303px;" width="22" height="21" viewBox="0 0 22 21"><path d="M0.6 20.7 L20.9 0.2 V20.7Z" fill="#b4b4b4"/></svg>
<div class="r" style="left:39px;top:299px;width:97px;height:28px;background:#d2d2d2;"></div>
<div class="r" style="left:135px;top:299px;width:1px;height:28px;background:#c4c4c4;"></div>
<div class="r" style="left:231px;top:299px;width:1px;height:28px;background:#c4c4c4;"></div>
<div class="r" style="left:327px;top:299px;width:1px;height:28px;background:#c4c4c4;"></div>
<div class="r" style="left:423px;top:299px;width:1px;height:28px;background:#c4c4c4;"></div>
<div class="r" style="left:519px;top:299px;width:1px;height:28px;background:#c4c4c4;"></div>
<div class="r" style="left:615px;top:299px;width:1px;height:28px;background:#c4c4c4;"></div>
<div class="r" style="left:711px;top:299px;width:1px;height:28px;background:#c4c4c4;"></div>
<div class="r" style="left:807px;top:299px;width:1px;height:28px;background:#c4c4c4;"></div>
<div class="r" style="left:903px;top:299px;width:1px;height:28px;background:#c4c4c4;"></div>
<div class="r" style="left:999px;top:299px;width:1px;height:28px;background:#c4c4c4;"></div>
<div class="r" style="left:1095px;top:299px;width:1px;height:28px;background:#c4c4c4;"></div>
<div class="r" style="left:1191px;top:299px;width:1px;height:28px;background:#c4c4c4;"></div>
<div class="r" style="left:1287px;top:299px;width:1px;height:28px;background:#c4c4c4;"></div>
<div class="r" style="left:1383px;top:299px;width:1px;height:28px;background:#c4c4c4;"></div>
<div class="r" style="left:1479px;top:299px;width:1px;height:28px;background:#c4c4c4;"></div>
<div class="r" style="left:1575px;top:299px;width:1px;height:28px;background:#c4c4c4;"></div>
<div class="r" style="left:1671px;top:299px;width:1px;height:28px;background:#c4c4c4;"></div>
<div class="r" style="left:1767px;top:299px;width:1px;height:28px;background:#c4c4c4;"></div>
<div class="r" style="left:1863px;top:299px;width:1px;height:28px;background:#c4c4c4;"></div>
<div class="r" style="left:39px;top:299px;width:1px;height:28px;background:#c4c4c4;"></div>
<div class="r" style="left:0px;top:327px;width:1890px;height:1px;background:#ababab;"></div>
<div class="t" style="left:57px;width:60px;text-align:center;top:308.12px;font-size:17.5px;color:#217346">A</div>
<div class="t" style="left:153px;width:60px;text-align:center;top:308.12px;font-size:17.5px;color:#262626">B</div>
<div class="t" style="left:249px;width:60px;text-align:center;top:308.12px;font-size:17.5px;color:#262626">C</div>
<div class="t" style="left:345px;width:60px;text-align:center;top:308.12px;font-size:17.5px;color:#262626">D</div>
<div class="t" style="left:441px;width:60px;text-align:center;top:308.12px;font-size:17.5px;color:#262626">E</div>
<div class="t" style="left:537px;width:60px;text-align:center;top:308.12px;font-size:17.5px;color:#262626">F</div>
<div class="t" style="left:633px;width:60px;text-align:center;top:308.12px;font-size:17.5px;color:#262626">G</div>
<div class="t" style="left:729px;width:60px;text-align:center;top:308.12px;font-size:17.5px;color:#262626">H</div>
<div class="t" style="left:825px;width:60px;text-align:center;top:308.12px;font-size:17.5px;color:#262626">I</div>
<div class="t" style="left:921px;width:60px;text-align:center;top:308.12px;font-size:17.5px;color:#262626">J</div>
<div class="t" style="left:1017px;width:60px;text-align:center;top:308.12px;font-size:17.5px;color:#262626">K</div>
<div class="t" style="left:1113px;width:60px;text-align:center;top:308.12px;font-size:17.5px;color:#262626">L</div>
<div class="t" style="left:1209px;width:60px;text-align:center;top:308.12px;font-size:17.5px;color:#262626">M</div>
<div class="t" style="left:1305px;width:60px;text-align:center;top:308.12px;font-size:17.5px;color:#262626">N</div>
<div class="t" style="left:1401px;width:60px;text-align:center;top:308.12px;font-size:17.5px;color:#262626">O</div>
<div class="t" style="left:1497px;width:60px;text-align:center;top:308.12px;font-size:17.5px;color:#262626">P</div>
<div class="t" style="left:1593px;width:60px;text-align:center;top:308.12px;font-size:17.5px;color:#262626">Q</div>
<div class="t" style="left:1689px;width:60px;text-align:center;top:308.12px;font-size:17.5px;color:#262626">R</div>
<div class="t" style="left:1785px;width:60px;text-align:center;top:308.12px;font-size:17.5px;color:#262626">S</div>
<div class="r" style="left:40px;top:328px;width:1850px;height:625px;background:#ffffff;"></div>
<div class="r" style="left:0px;top:328px;width:39px;height:625px;background:#e6e6e6;"></div>
<div class="r" style="left:0px;top:328px;width:39px;height:327px;background:#d2d2d2;"></div>
<div class="r" style="left:39px;top:328px;width:1px;height:625px;background:#ababab;"></div>
<div class="r" style="left:0px;top:364px;width:39px;height:1px;background:#bcbcbc;"></div>
<div class="r" style="left:40px;top:364px;width:1850px;height:1px;background:#dadada;"></div>
<div class="r" style="left:0px;top:393px;width:39px;height:1px;background:#bcbcbc;"></div>
<div class="r" style="left:40px;top:393px;width:1850px;height:1px;background:#dadada;"></div>
<div class="r" style="left:0px;top:422px;width:39px;height:1px;background:#bcbcbc;"></div>
<div class="r" style="left:40px;top:422px;width:1850px;height:1px;background:#dadada;"></div>
<div class="r" style="left:0px;top:451px;width:39px;height:1px;background:#bcbcbc;"></div>
<div class="r" style="left:40px;top:451px;width:1850px;height:1px;background:#dadada;"></div>
<div class="r" style="left:0px;top:480px;width:39px;height:1px;background:#bcbcbc;"></div>
<div class="r" style="left:40px;top:480px;width:1850px;height:1px;background:#dadada;"></div>
<div class="r" style="left:0px;top:509px;width:39px;height:1px;background:#bcbcbc;"></div>
<div class="r" style="left:40px;top:509px;width:1850px;height:1px;background:#dadada;"></div>
<div class="r" style="left:0px;top:538px;width:39px;height:1px;background:#bcbcbc;"></div>
<div class="r" style="left:40px;top:538px;width:1850px;height:1px;background:#dadada;"></div>
<div class="r" style="left:0px;top:567px;width:39px;height:1px;background:#bcbcbc;"></div>
<div class="r" style="left:40px;top:567px;width:1850px;height:1px;background:#dadada;"></div>
<div class="r" style="left:0px;top:596px;width:39px;height:1px;background:#bcbcbc;"></div>
<div class="r" style="left:40px;top:596px;width:1850px;height:1px;background:#dadada;"></div>
<div class="r" style="left:0px;top:625px;width:39px;height:1px;background:#bcbcbc;"></div>
<div class="r" style="left:40px;top:625px;width:1850px;height:1px;background:#dadada;"></div>
<div class="r" style="left:0px;top:654px;width:39px;height:1px;background:#bcbcbc;"></div>
<div class="r" style="left:40px;top:654px;width:1850px;height:1px;background:#dadada;"></div>
<div class="r" style="left:0px;top:683px;width:39px;height:1px;background:#c4c4c4;"></div>
<div class="r" style="left:40px;top:683px;width:1850px;height:1px;background:#dadada;"></div>
<div class="r" style="left:0px;top:712px;width:39px;height:1px;background:#c4c4c4;"></div>
<div class="r" style="left:40px;top:712px;width:1850px;height:1px;background:#dadada;"></div>
<div class="r" style="left:0px;top:741px;width:39px;height:1px;background:#c4c4c4;"></div>
<div class="r" style="left:40px;top:741px;width:1850px;height:1px;background:#dadada;"></div>
<div class="r" style="left:0px;top:770px;width:39px;height:1px;background:#c4c4c4;"></div>
<div class="r" style="left:40px;top:770px;width:1850px;height:1px;background:#dadada;"></div>
<div class="r" style="left:0px;top:799px;width:39px;height:1px;background:#c4c4c4;"></div>
<div class="r" style="left:40px;top:799px;width:1850px;height:1px;background:#dadada;"></div>
<div class="r" style="left:0px;top:828px;width:39px;height:1px;background:#c4c4c4;"></div>
<div class="r" style="left:40px;top:828px;width:1850px;height:1px;background:#dadada;"></div>
<div class="r" style="left:0px;top:857px;width:39px;height:1px;background:#c4c4c4;"></div>
<div class="r" style="left:40px;top:857px;width:1850px;height:1px;background:#dadada;"></div>
<div class="r" style="left:0px;top:886px;width:39px;height:1px;background:#c4c4c4;"></div>
<div class="r" style="left:40px;top:886px;width:1850px;height:1px;background:#dadada;"></div>
<div class="r" style="left:0px;top:915px;width:39px;height:1px;background:#c4c4c4;"></div>
<div class="r" style="left:40px;top:915px;width:1850px;height:1px;background:#dadada;"></div>
<div class="r" style="left:0px;top:944px;width:39px;height:1px;background:#c4c4c4;"></div>
<div class="r" style="left:40px;top:944px;width:1850px;height:1px;background:#dadada;"></div>
<div class="r" style="left:135px;top:328px;width:1px;height:625px;background:#dadada;"></div>
<div class="r" style="left:231px;top:328px;width:1px;height:625px;background:#dadada;"></div>
<div class="r" style="left:327px;top:328px;width:1px;height:625px;background:#dadada;"></div>
<div class="r" style="left:423px;top:328px;width:1px;height:625px;background:#dadada;"></div>
<div class="r" style="left:519px;top:328px;width:1px;height:625px;background:#dadada;"></div>
<div class="r" style="left:615px;top:328px;width:1px;height:625px;background:#dadada;"></div>
<div class="r" style="left:711px;top:328px;width:1px;height:625px;background:#dadada;"></div>
<div class="r" style="left:807px;top:328px;width:1px;height:625px;background:#dadada;"></div>
<div class="r" style="left:903px;top:328px;width:1px;height:625px;background:#dadada;"></div>
<div class="r" style="left:999px;top:328px;width:1px;height:625px;background:#dadada;"></div>
<div class="r" style="left:1095px;top:328px;width:1px;height:625px;background:#dadada;"></div>
<div class="r" style="left:1191px;top:328px;width:1px;height:625px;background:#dadada;"></div>
<div class="r" style="left:1287px;top:328px;width:1px;height:625px;background:#dadada;"></div>
<div class="r" style="left:1383px;top:328px;width:1px;height:625px;background:#dadada;"></div>
<div class="r" style="left:1479px;top:328px;width:1px;height:625px;background:#dadada;"></div>
<div class="r" style="left:1575px;top:328px;width:1px;height:625px;background:#dadada;"></div>
<div class="r" style="left:1671px;top:328px;width:1px;height:625px;background:#dadada;"></div>
<div class="r" style="left:1767px;top:328px;width:1px;height:625px;background:#dadada;"></div>
<div class="r" style="left:1863px;top:328px;width:1px;height:625px;background:#dadada;"></div>
<div class="t" style="left:2px;width:37px;text-align:center;top:341.27px;font-size:18.5px;color:#217346">1</div>
<div class="t" style="left:2px;width:37px;text-align:center;top:371.77px;font-size:18.5px;color:#217346">2</div>
<div class="t" style="left:2px;width:37px;text-align:center;top:400.77px;font-size:18.5px;color:#217346">3</div>
<div class="t" style="left:2px;width:37px;text-align:center;top:429.77px;font-size:18.5px;color:#217346">4</div>
<div class="t" style="left:2px;width:37px;text-align:center;top:458.77px;font-size:18.5px;color:#217346">5</div>
<div class="t" style="left:2px;width:37px;text-align:center;top:487.77px;font-size:18.5px;color:#217346">6</div>
<div class="t" style="left:2px;width:37px;text-align:center;top:516.77px;font-size:18.5px;color:#217346">7</div>
<div class="t" style="left:2px;width:37px;text-align:center;top:545.77px;font-size:18.5px;color:#217346">8</div>
<div class="t" style="left:2px;width:37px;text-align:center;top:574.77px;font-size:18.5px;color:#217346">9</div>
<div class="t" style="left:2px;width:37px;text-align:center;top:603.77px;font-size:18.5px;color:#217346">10</div>
<div class="t" style="left:2px;width:37px;text-align:center;top:632.77px;font-size:18.5px;color:#217346">11</div>
<div class="t" style="left:2px;width:37px;text-align:center;top:661.77px;font-size:18.5px;color:#262626">12</div>
<div class="t" style="left:2px;width:37px;text-align:center;top:690.77px;font-size:18.5px;color:#262626">13</div>
<div class="t" style="left:2px;width:37px;text-align:center;top:719.77px;font-size:18.5px;color:#262626">14</div>
<div class="t" style="left:2px;width:37px;text-align:center;top:748.77px;font-size:18.5px;color:#262626">15</div>
<div class="t" style="left:2px;width:37px;text-align:center;top:777.77px;font-size:18.5px;color:#262626">16</div>
<div class="t" style="left:2px;width:37px;text-align:center;top:806.77px;font-size:18.5px;color:#262626">17</div>
<div class="t" style="left:2px;width:37px;text-align:center;top:835.77px;font-size:18.5px;color:#262626">18</div>
<div class="t" style="left:2px;width:37px;text-align:center;top:864.77px;font-size:18.5px;color:#262626">19</div>
<div class="t" style="left:2px;width:37px;text-align:center;top:893.77px;font-size:18.5px;color:#262626">20</div>
<div class="t" style="left:2px;width:37px;text-align:center;top:922.77px;font-size:18.5px;color:#262626">21</div>
<div class="r" style="left:41px;top:365px;width:93px;height:288px;background:#c6c6c6;"></div>
<div class="r" style="left:41px;top:393px;width:93px;height:1px;background:#a9a9a9;"></div>
<div class="r" style="left:41px;top:422px;width:93px;height:1px;background:#a9a9a9;"></div>
<div class="r" style="left:41px;top:451px;width:93px;height:1px;background:#a9a9a9;"></div>
<div class="r" style="left:41px;top:480px;width:93px;height:1px;background:#a9a9a9;"></div>
<div class="r" style="left:41px;top:509px;width:93px;height:1px;background:#a9a9a9;"></div>
<div class="r" style="left:41px;top:538px;width:93px;height:1px;background:#a9a9a9;"></div>
<div class="r" style="left:41px;top:567px;width:93px;height:1px;background:#a9a9a9;"></div>
<div class="r" style="left:41px;top:596px;width:93px;height:1px;background:#a9a9a9;"></div>
<div class="r" style="left:41px;top:625px;width:93px;height:1px;background:#a9a9a9;"></div>
<div class="r" style="left:41px;top:364px;width:93px;height:1px;background:#a9a9a9;"></div>
<div class="t" style="left:44.4px;top:335.32px;font-size:25.5px;color:#000000;font-weight:bold;font-style:normal;">Value</div>
<div class="r" style="left:38px;top:326px;width:99px;height:330px;background:none;border:2px solid #217346;"></div>
<div class="r" style="left:132px;top:650px;width:6px;height:6px;background:#217346;border:1px solid #fff;"></div>
<div class="r" style="left:1889px;top:327px;width:1px;height:627px;background:#ababab;"></div>
<div class="r" style="left:0px;top:953px;width:1890px;height:1px;background:#ababab;"></div>
<div class="r" style="left:1890px;top:299px;width:30px;height:655px;background:#e6e6e6;"></div>
<div class="r" style="left:1892px;top:300px;width:25px;height:25px;background:#ffffff;border:1px solid #c6c6c6;"></div>
<svg class="r" style="left:1898px;top:308px;" width="13" height="8" viewBox="0 0 13 8"><path d="M0.5 7.5L6.5 1l6 6.5z" fill="#777"/></svg>
<div class="r" style="left:1892px;top:325px;width:25px;height:605px;background:#dadada;"></div>
<div class="r" style="left:1892px;top:326px;width:25px;height:575px;background:#ffffff;border:1px solid #c6c6c6;"></div>
<div class="r" style="left:1892px;top:930px;width:25px;height:25px;background:#ffffff;border:1px solid #c6c6c6;"></div>
<svg class="r" style="left:1898px;top:938px;" width="13" height="8" viewBox="0 0 13 8"><path d="M0.5 0.5h12l-6 6.5z" fill="#777"/></svg>
<div class="t" style="left:1233px;top:557px;font-size:56px;font-weight:normal;font-style:italic;color:#000;-webkit-text-stroke:1.8px #000;letter-spacing:3px;transform:scaleX(0.911);transform-origin:0 0;">developerpublish<span style="font-size:0.62em;vertical-align:0.12em;font-weight:bold;-webkit-text-stroke:0">&#8226;</span>com</div>
<div class="r" style="left:0px;top:954px;width:1920px;height:34px;background:#e6e6e6;"></div>
<div class="r" style="left:0px;top:987px;width:1920px;height:1px;background:#d4d4d4;"></div>
<svg class="r" style="left:28px;top:963px;" width="8" height="12" viewBox="0 0 8 12"><path d="M7 0.5v11L0.5 6z" fill="#c6c6c6"/></svg>
<svg class="r" style="left:63px;top:963px;" width="8" height="12" viewBox="0 0 8 12"><path d="M1 0.5v11L7.5 6z" fill="#c6c6c6"/></svg>
<div class="r" style="left:118px;top:953px;width:89px;height:31px;background:#ffffff;border:1px solid #ababab;border-top:none;"></div>
<div class="r" style="left:118px;top:982px;width:89px;height:2px;background:#217346;"></div>
<div class="t" style="left:130.5px;top:957.70px;font-size:20px;color:#217346;font-weight:bold;font-style:normal;">Sheet1</div>
<div class="r" style="left:246px;top:959px;width:22px;height:22px;border:1.5px solid #777;border-radius:50%;"></div>
<svg class="r" style="left:250px;top:963px;" width="14" height="14" viewBox="0 0 14 14"><path d="M7 2v10M2 7h10" stroke="#666" stroke-width="1.7"/></svg>
<div class="r" style="left:1148px;top:962px;width:3px;height:3px;background:#a6a6a6;"></div>
<div class="r" style="left:1148px;top:968px;width:3px;height:3px;background:#a6a6a6;"></div>
<div class="r" style="left:1148px;top:974px;width:3px;height:3px;background:#a6a6a6;"></div>
<div class="r" style="left:1168px;top:957px;width:700px;height:25px;background:#dadada;"></div>
<div class="r" style="left:1168px;top:957px;width:25px;height:25px;background:#ffffff;border:1px solid #c6c6c6;"></div>
<svg class="r" style="left:1175px;top:963px;" width="8" height="12" viewBox="0 0 8 12"><path d="M7.5 0.5v11L1 6z" fill="#777"/></svg>
<div class="r" style="left:1192px;top:957px;width:638px;height:25px;background:#ffffff;border:1px solid #c6c6c6;"></div>
<div class="r" style="left:1866px;top:957px;width:25px;height:25px;background:#ffffff;border:1px solid #c6c6c6;"></div>
<svg class="r" style="left:1875px;top:963px;" width="8" height="12" viewBox="0 0 8 12"><path d="M0.5 0.5v11L7 6z" fill="#777"/></svg>
<div class="r" style="left:0px;top:988px;width:1920px;height:32px;background:#f3f3f3;"></div>
<div class="t" style="left:12.2px;top:996.96px;font-size:15.1px;color:#444444;font-weight:normal;font-style:normal;">Ready</div>
<div class="r" style="left:1475px;top:988px;width:60px;height:32px;background:#c6c6c6;"></div>
<svg class="r" style="left:1494px;top:993px;" width="21" height="21" viewBox="0 0 21 21"><path d="M1.5 1.5h18v18h-18zM7.5 1.5v18M13.5 1.5v18M1.5 7.5h18M1.5 13.5h18" fill="none" stroke="#666" stroke-width="1.1"/></svg>
<svg class="r" style="left:1554px;top:993px;" width="21" height="21" viewBox="0 0 21 21"><path d="M1.5 1.5h18v18h-18zM4.5 4.5h12v12h-12z" fill="none" stroke="#666" stroke-width="1.1"/><path d="M7 7.8h7M7 10.5h7M7 13.2h7" stroke="#666" stroke-width="1"/></svg>
<svg class="r" style="left:1614px;top:993px;" width="21" height="21" viewBox="0 0 21 21"><path d="M1.5 1.5h18v17h-18zM1.5 13.5h12v-12M7.5 1.5v7" fill="none" stroke="#666" stroke-width="1.1"/></svg>
<div class="r" style="left:1663px;top:1003px;width:12px;height:1px;background:#555;"></div>
<div class="r" style="left:1683px;top:1002.5px;width:148px;height:2px;background:#a6a6a6;"></div>
<div class="r" style="left:1753px;top:995px;width:8px;height:17px;background:#737373;"></div>
<svg class="r" style="left:1838px;top:997px;" width="14" height="14" viewBox="0 0 14 14"><path d="M7 0.5v13M0.5 7h13" stroke="#555" stroke-width="1"/></svg>
<div class="t" style="left:1870.7px;top:996.48px;font-size:15.2px;color:#444444;font-weight:normal;font-style:normal;">100%</div>
<div class="r" style="left:0px;top:1020px;width:1920px;height:4px;background:#2d2b33;"></div>
<div class="r" style="left:72px;top:1020px;width:515px;height:4px;background:#e8e8e8;"></div>
<div class="r" style="left:587px;top:1020px;width:675px;height:4px;background:#3a2830;"></div>
<div class="r" style="left:1262px;top:1020px;width:73px;height:4px;background:#6a6a6a;"></div>
<div class="r" style="left:411px;top:239px;width:653px;height:505px;box-shadow:0 0 18px 4px rgba(0,0,0,0.22);"></div>
<div class="r" style="left:411px;top:239px;width:653px;height:505px;background:#f0f0f0;border:1px solid #6f6f6f;"></div>
<div class="r" style="left:412px;top:240px;width:651px;height:44px;background:#ffffff;"></div>
<div class="t" style="left:424.2px;top:253.74px;font-size:17.6px;color:#000000;font-weight:normal;font-style:normal;">Data Validation</div>
<div class="t" style="left:955.20px;top:251.61px;font-size:21.16px;color:#222222;font-weight:normal;transform:scaleX(0.6131);transform-origin:0 0;">?</div>
<svg class="r" style="left:1020px;top:253px;" width="18" height="17" viewBox="0 0 18 17"><path d="M1 1l15.5 15M16.5 1L1 16" stroke="#111" stroke-width="1.3"/></svg>
<div class="r" style="left:513px;top:297px;width:130px;height:32px;background:#f0f0f0;border:1px solid #d9d9d9;border-bottom:none;"></div>
<div class="r" style="left:642px;top:297px;width:101px;height:32px;background:#f0f0f0;border:1px solid #d9d9d9;border-bottom:none;"></div>
<div class="r" style="left:422px;top:328px;width:629px;height:353px;background:#ffffff;border:1px solid #d9d9d9;"></div>
<div class="r" style="left:422px;top:295px;width:92px;height:34px;background:#ffffff;border:1px solid #d9d9d9;border-bottom:none;"></div>
<div class="t" style="left:439px;top:307.04px;font-size:15.6px;color:#000000;font-weight:normal;font-style:normal;">Settings</div>
<div class="t" style="left:526.8px;top:307.04px;font-size:15.6px;color:#000000;font-weight:normal;font-style:normal;">Input Message</div>
<div class="t" style="left:657.4px;top:307.04px;font-size:15.6px;color:#000000;font-weight:normal;font-style:normal;">Error Alert</div>
<div class="t" style="left:437.3px;top:347.74px;font-size:15.6px;color:#000000;font-weight:normal;font-style:normal;">Validation criteria</div>
<div class="r" style="left:564px;top:354px;width:475px;height:1px;background:#dcdcdc;"></div>
<div class="t" style="left:452.2px;top:379.74px;font-size:15.6px;color:#000000;font-weight:normal;font-style:normal;"><u>A</u>llow:</div>
<div class="r" style="left:452px;top:402px;width:215px;height:34px;background:#ffffff;border:1px solid #adadad;"></div>
<div class="r" style="left:454px;top:408px;width:185px;height:21px;background:#0078d7;outline:1px dotted #e08a2c;outline-offset:-1px;"></div>
<div class="t" style="left:458px;top:411.24px;font-size:15.6px;color:#ffffff;font-weight:normal;font-style:normal;">Decimal</div>
<div class="r" style="left:639px;top:404px;width:26px;height:30px;background:#e1e1e1;border:1px solid #adadad;"></div>
<svg class="r" style="left:645px;top:414px;" width="13" height="9" viewBox="0 0 13 9"><path d="M1 1.5l5.5 6 5.5-6" fill="none" stroke="#333" stroke-width="1.3"/></svg>
<div class="r" style="left:682px;top:404px;width:20px;height:20px;background:#ffffff;border:1px solid #333;"></div>
<svg class="r" style="left:684px;top:406px;" width="16" height="16" viewBox="0 0 16 16"><path d="M2.5 8.5l4 4 7.5-9" fill="none" stroke="#333" stroke-width="1.6"/></svg>
<div class="t" style="left:708.75px;top:407.54px;font-size:15.6px;color:#000000;font-weight:normal;font-style:normal;">Ignore <u>b</u>lank</div>
<div class="t" style="left:452.2px;top:445.14px;font-size:15.6px;color:#000000;font-weight:normal;font-style:normal;"><u>D</u>ata:</div>
<div class="r" style="left:452px;top:467px;width:215px;height:34px;background:#ffffff;border:1px solid #adadad;"></div>
<div class="t" style="left:457.4px;top:477.04px;font-size:15.6px;color:#000000;font-weight:normal;font-style:normal;">between</div>
<div class="r" style="left:639px;top:469px;width:26px;height:30px;background:#e1e1e1;border:1px solid #adadad;"></div>
<svg class="r" style="left:645px;top:479px;" width="13" height="9" viewBox="0 0 13 9"><path d="M1 1.5l5.5 6 5.5-6" fill="none" stroke="#333" stroke-width="1.3"/></svg>
<div class="t" style="left:452.2px;top:510.34px;font-size:15.6px;color:#000000;font-weight:normal;font-style:normal;"><u>M</u>inimum:</div>
<div class="r" style="left:452px;top:532px;width:388px;height:32px;background:#ffffff;border:1px solid #adadad;"></div>
<div class="r" style="left:839px;top:532px;width:33px;height:32px;background:#e1e1e1;border:2px solid #b4b4b4;border-left:1px solid #adadad;"></div>
<div class="r" style="left:844px;top:538px;width:22px;height:20px;background:#ffffff;"></div>
<svg class="r" style="left:846px;top:538px;" width="18" height="18" viewBox="0 0 18 18"><g transform="translate(-846 -538)"><path d="M854 538.8 L860.2 545 V548 L856 545.5 V551 H852 V545.5 L847.8 548 V545 Z" fill="#000"/><rect x="848" y="553" width="12" height="1" fill="#000"/></g></svg>
<div class="t" style="left:452.2px;top:573.04px;font-size:15.6px;color:#000000;font-weight:normal;font-style:normal;">Ma<u>x</u>imum:</div>
<div class="r" style="left:452px;top:595px;width:388px;height:32px;background:#ffffff;border:1px solid #adadad;"></div>
<div class="r" style="left:839px;top:595px;width:33px;height:32px;background:#e1e1e1;border:2px solid #b4b4b4;border-left:1px solid #adadad;"></div>
<div class="r" style="left:844px;top:601px;width:22px;height:20px;background:#ffffff;"></div>
<svg class="r" style="left:846px;top:601px;" width="18" height="18" viewBox="0 0 18 18"><g transform="translate(-846 -538)"><path d="M854 538.8 L860.2 545 V548 L856 545.5 V551 H852 V545.5 L847.8 548 V545 Z" fill="#000"/><rect x="848" y="553" width="12" height="1" fill="#000"/></g></svg>
<div class="r" style="left:437px;top:642px;width:20px;height:20px;background:#ffffff;border:1px solid #cccccc;"></div>
<div class="t" style="left:463.3px;top:645.54px;font-size:15.6px;color:#6d6d6d;font-weight:normal;font-style:normal;">Apply these changes to all other cells with the same settings</div>
<div class="r" style="left:422px;top:695px;width:124px;height:36px;background:#e1e1e1;border:1px solid #adadad;"></div>
<div class="t" style="left:455px;top:705.94px;font-size:15.6px;color:#000000;font-weight:normal;font-style:normal;"><u>C</u>lear All</div>
<div class="r" style="left:788px;top:695px;width:124px;height:36px;background:#e5f1fb;border:1px solid #0078d7;"></div>
<div class="t" style="left:839px;top:705.94px;font-size:15.6px;color:#000000;font-weight:normal;font-style:normal;">OK</div>
<div class="r" style="left:928px;top:695px;width:124px;height:36px;background:#e1e1e1;border:1px solid #adadad;"></div>
<div class="t" style="left:966.6px;top:705.94px;font-size:15.6px;color:#000000;font-weight:normal;font-style:normal;">Cancel</div>
</body></html>
